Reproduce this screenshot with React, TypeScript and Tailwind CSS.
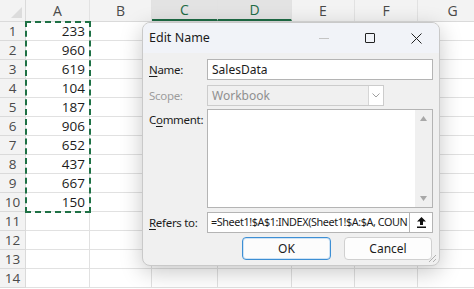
import React from 'react';

const cols = [
  { label: 'A', w: 64 },
  { label: 'B', w: 62 },
  { label: 'C', w: 66, sel: true },
  { label: 'D', w: 74, sel: true },
  { label: 'E', w: 63 },
  { label: 'F', w: 63 },
  { label: 'G', w: 70 },
];

const values = [233, 960, 619, 104, 187, 906, 652, 437, 667, 150];
const rows = Array.from({ length: 14 }, (_, i) => i + 1);

const ui = { fontFamily: '"Noto Sans", "Open Sans", sans-serif' };
const cell = { fontFamily: '"Open Sans", "Noto Sans", sans-serif' };

function Label({ pre, u, post, disabled }: { pre?: string; u?: string; post: string; disabled?: boolean }) {
  return (
    <span className={`w-[58px] shrink-0 text-[11.5px] tracking-[-0.3px] whitespace-nowrap ${disabled ? 'text-[#9d9d9d]' : 'text-[#1b1b1b]'}`}>
      {pre}
      {u && <span className="underline underline-offset-2">{u}</span>}
      {post}
    </span>
  );
}

function EditNameDialog() {
  return (
    <div
      className="absolute left-[142px] top-[22px] w-[298px] h-[244px] rounded-[8px] border border-[#c9c9c9] bg-[#f0f0f0] shadow-[0_6px_22px_rgba(0,0,0,0.22)] overflow-hidden flex flex-col"
      style={ui}
    >
      {/* title bar */}
      <div className="h-[30px] flex items-center bg-[#f1f3f8] pl-[6px]">
        <span className="text-[12.5px] text-[#1b1b1b] flex-1">Edit Name</span>
        <div className="w-[46px] flex justify-center">
          <div className="w-[10px] h-px bg-[#c4c4c4]" />
        </div>
        <div className="w-[46px] flex justify-center">
          <div className="w-[10px] h-[10px] border border-[#222] rounded-[1px]" />
        </div>
        <div className="w-[46px] flex justify-center">
          <svg width="11" height="11" viewBox="0 0 11 11">
            <path d="M0.5 0.5 L10.5 10.5 M10.5 0.5 L0.5 10.5" stroke="#222" strokeWidth="1" />
          </svg>
        </div>
      </div>

      {/* body */}
      <div className="flex flex-col pl-[6px] pr-[6px] pt-[6px]">
        <div className="flex items-center h-[21px]">
          <Label u="N" post="ame:" />
          <div className="w-[226px] h-[21px] bg-white border border-[#b4b4b4] flex items-center px-[4px] text-[12px] text-[#1b1b1b]">
            SalesData
          </div>
        </div>

        <div className="flex items-center h-[21px] mt-[5px]">
          <Label post="Scope:" disabled />
          <div className="w-[177px] h-[21px] border border-[#cccccc] bg-[#f0f0f0] flex items-center">
            <span className="flex-1 px-[4px] text-[12px] text-[#8f8f8f]">Workbook</span>
            <div className="w-[15px] h-full bg-white border-l border-[#d6d6d6] flex items-center justify-center">
              <svg width="8" height="5" viewBox="0 0 8 5">
                <path d="M0.5 0.5 L4 4 L7.5 0.5" fill="none" stroke="#a0a0a0" strokeWidth="1" />
              </svg>
            </div>
          </div>
        </div>

        <div className="flex items-start mt-[3px]">
          <div className="w-[58px] shrink-0 pt-[2px] flex">
            <Label pre="C" u="o" post="mment:" />
          </div>
          <div className="w-[226px] h-[99px] bg-white border border-[#b4b4b4] flex justify-end">
            <div className="w-[17px] h-full bg-[#f0f0f0] flex flex-col items-center justify-between py-[6px]">
              <svg width="7" height="5" viewBox="0 0 7 5">
                <path d="M3.5 0 L7 5 L0 5 Z" fill="#a8a8a8" />
              </svg>
              <svg width="7" height="5" viewBox="0 0 7 5">
                <path d="M0 0 L7 0 L3.5 5 Z" fill="#a8a8a8" />
              </svg>
            </div>
          </div>
        </div>

        <div className="flex items-center h-[21px] mt-[4px]">
          <Label u="R" post="efers to:" />
          <div className="w-[226px] h-[21px] flex">
            <div className="flex-1 min-w-0 h-full bg-white border border-[#b4b4b4] flex items-center pl-[3px] overflow-hidden whitespace-nowrap text-[10.8px] text-[#1b1b1b] tracking-[-0.4px]">
              =Sheet1!$A$1:INDEX(Sheet1!$A:$A, COUN
            </div>
            <div className="w-[23px] h-full bg-white border border-l-0 border-[#b4b4b4] flex items-center justify-center">
              <svg width="9" height="11" viewBox="0 0 9 11">
                <path d="M4.5 0 L9 4.5 L6 4.5 L6 8 L3 8 L3 4.5 L0 4.5 Z" fill="#111" />
                <rect x="0" y="9.5" width="9" height="1.5" fill="#111" />
              </svg>
            </div>
          </div>
        </div>

        <div className="flex justify-end gap-[13px] mt-[4px] pr-[1px]">
          <button className="w-[89px] h-[23px] rounded-[4px] bg-[#fcfcfc] border border-[#3d8fd4] shadow-[inset_0_0_0_1px_#cfe3f5] text-[12px] text-[#1b1b1b]">
            OK
          </button>
          <button className="w-[88px] h-[23px] rounded-[4px] bg-[#fdfdfd] border border-[#d0d0d0] text-[12px] text-[#1b1b1b]">
            Cancel
          </button>
        </div>
      </div>

      {/* resize grip */}
      <svg className="absolute right-[2px] bottom-[2px]" width="9" height="9" viewBox="0 0 9 9">
        <path d="M8 1 L1 8 M8 5 L5 8" stroke="#b0b0b0" strokeWidth="1" />
      </svg>
    </div>
  );
}

export default function App() {
  return (
    <div className="relative w-[474px] h-[289px] overflow-hidden bg-white" style={cell}>
      {/* column headers */}
      <div className="flex h-[22px] bg-[#f3f3f3] border-b border-[#dadada]">
        <div className="w-[26px] shrink-0 border-r border-[#dadada] relative">
          <svg className="absolute right-[3px] bottom-[3px]" width="11" height="11" viewBox="0 0 11 11">
            <path d="M11 0 L11 11 L0 11 Z" fill="#dcdcdc" />
          </svg>
        </div>
        {cols.map((c) => (
          <div
            key={c.label}
            className={`shrink-0 flex items-center justify-center text-[14px] border-r border-[#e2e2e2] ${
              c.sel ? 'bg-[#e3e3e3] text-[#1e6b45] border-b-2 border-b-[#1e6b45]' : 'text-[#4a4a4a]'
            }`}
            style={{ width: c.w }}
          >
            {c.label}
          </div>
        ))}
      </div>

      {/* rows */}
      {rows.map((r) => (
        <div key={r} className="flex h-[19px]">
          <div className="w-[26px] shrink-0 bg-[#f3f3f3] border-r border-b border-[#dadada] flex items-center justify-center text-[13.5px] text-[#4a4a4a]">
            {r}
          </div>
          {cols.map((c, i) => (
            <div
              key={c.label}
              className="shrink-0 border-r border-b border-[#e1e1e1] flex items-center justify-end pr-[4px] text-[13.5px] text-[#1b1b1b]"
              style={{ width: c.w }}
            >
              {i === 0 && r <= 10 ? values[r - 1] : ''}
            </div>
          ))}
        </div>
      ))}

      {/* copy marquee around A1:A10 */}
      <div className="absolute left-[25px] top-[21px] w-[66px] h-[192px] border-2 border-dashed border-[#1e7145] pointer-events-none" />

      <EditNameDialog />
    </div>
  );
}
